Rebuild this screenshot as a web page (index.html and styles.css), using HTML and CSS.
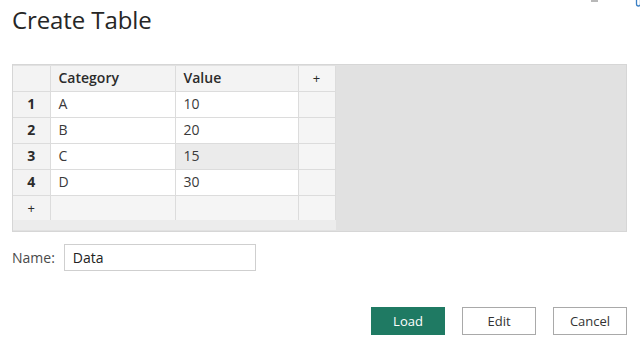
FILE: index.html
```html
<!DOCTYPE html>
<html>
<head>
<meta charset="utf-8">
<link rel="stylesheet" href="styles.css">
</head>
<body>
<div class="dialog">
  <div class="topmark"></div>
  <svg class="topglyph" width="6" height="10" viewBox="0 0 6 10"><path d="M1.5 0 V4 A2 2 0 0 0 5.5 4 V0" fill="none" stroke="#3a7fc4" stroke-width="1.3"/></svg>
  <h1 class="title">Create Table</h1>
  <div class="grid-area">
    <table class="grid">
      <colgroup>
        <col class="c-num"><col class="c-cat"><col class="c-val"><col class="c-add">
      </colgroup>
      <tr class="head">
        <th class="num"></th><th>Category</th><th>Value</th><th class="add">+</th>
      </tr>
      <tr><td class="num">1</td><td>A</td><td>10</td><td class="add"></td></tr>
      <tr><td class="num">2</td><td>B</td><td>20</td><td class="add"></td></tr>
      <tr><td class="num">3</td><td>C</td><td class="sel">15</td><td class="add"></td></tr>
      <tr><td class="num">4</td><td>D</td><td>30</td><td class="add"></td></tr>
      <tr class="newrow"><td class="num plus">+</td><td></td><td></td><td class="add"></td></tr>
    </table>
  </div>
  <div class="name-row">
    <label class="name-label">Name:</label>
    <div class="name-input">Data</div>
  </div>
  <div class="buttons">
    <button class="btn primary">Load</button>
    <button class="btn">Edit</button>
    <button class="btn">Cancel</button>
  </div>
</div>
</body>
</html>
```

FILE: styles.css
```css
html, body {
  margin: 0;
  padding: 0;
  background: #ffffff;
  width: 640px;
  height: 344px;
  overflow: hidden;
}
.dialog {
  position: relative;
  width: 640px;
  height: 344px;
  padding: 0 13px 0 12px;
  box-sizing: border-box;
  font-family: "Open Sans", "Noto Sans", sans-serif;
  color: #252525;
}
.topmark {
  position: absolute;
  top: 0;
  left: 591px;
  width: 7px;
  height: 2px;
  background: #b8b8b8;
}
.topglyph {
  position: absolute;
  top: 0;
  left: 635px;
}
.title {
  margin: 0;
  padding-top: 3px;
  font-size: 24px;
  font-weight: 500;
  line-height: 33px;
  height: 61px;
  letter-spacing: -0.1px;
  color: #262626;
}
.grid-area {
  background: #e1e1e1;
  border: 1px solid #d6d6d6;
  height: 168px;
  padding: 1px 0 0 0;
  box-sizing: border-box;
}
.grid {
  border-collapse: collapse;
  font-size: 14px;
  table-layout: fixed;
  width: 322px;
  border-bottom: 10px solid #ececec;
}
.c-num { width: 37px; }
.c-cat { width: 125px; }
.c-val { width: 123px; }
.c-add { width: 37px; }
.grid th, .grid td {
  height: 26px;
  padding: 0 0 0 8px;
  border: 1px solid #dcdcdc;
  background: #ffffff;
  text-align: left;
  color: #3a3a3a;
  box-sizing: border-box;
  line-height: 24px;
}
.grid th { height: 25px; }
.grid tr:first-child th { border-top: none; }
.grid tr > :first-child { border-left: none; }
.grid th {
  background: #f3f3f3;
  font-weight: 600;
  color: #2b2b2b;
}
.grid td.num {
  background: #f3f3f3;
  font-weight: 700;
  text-align: center;
  padding: 0;
  color: #2b2b2b;
}
.grid td.plus {
  font-weight: 400;
  font-size: 13px;
}
.grid .add {
  background: #f5f5f5;
  text-align: center;
  padding: 0;
  font-weight: 400;
  font-size: 13px;
}
.grid td.sel { background: #ebebeb; }
.grid .newrow td { background: #f5f5f5; }
.grid .newrow td.num { background: #f3f3f3; }
.name-row {
  display: flex;
  align-items: center;
  margin-top: 12px;
  gap: 9px;
}
.name-label {
  font-size: 14px;
  color: #4a4a4a;
}
.name-input {
  width: 192px;
  height: 27px;
  box-sizing: border-box;
  border: 1px solid #cfcfcf;
  padding-left: 8px;
  font-size: 14px;
  line-height: 25px;
  color: #222;
}
.buttons {
  display: flex;
  justify-content: flex-end;
  gap: 17px;
  margin-top: 36px;
}
.btn {
  width: 74px;
  height: 28px;
  box-sizing: border-box;
  border: 1px solid #a9a9a9;
  background: #ffffff;
  font-family: "Open Sans", "Noto Sans", sans-serif;
  font-size: 13px;
  color: #333;
  padding: 0;
}
.btn.primary {
  background: #1f7a63;
  border-color: #1f7a63;
  color: #ffffff;
}
```
